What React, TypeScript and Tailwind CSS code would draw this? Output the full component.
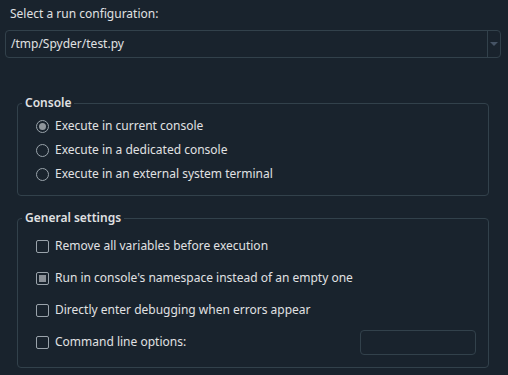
import React from "react";

function Radio({ checked, label }: { checked?: boolean; label: string }) {
  return (
    <div className="flex items-center h-6">
      <span className="w-[13px] h-[13px] rounded-full border border-[#9aa3ab] flex items-center justify-center shrink-0">
        {checked && <span className="w-[7px] h-[7px] rounded-full bg-[#8f969c]" />}
      </span>
      <span className="ml-[6px]">{label}</span>
    </div>
  );
}

function Check({ checked, label }: { checked?: boolean; label: string }) {
  return (
    <div className="flex items-center">
      <span className="w-[13px] h-[13px] rounded-[2px] border border-[#9aa3ab] flex items-center justify-center shrink-0">
        {checked && <span className="w-[7px] h-[7px] bg-[#8a9097]" />}
      </span>
      <span className="ml-[6px]">{label}</span>
    </div>
  );
}

export default function App() {
  return (
    <div
      className="w-[508px] h-[375px] bg-[#19232d] text-[#e0e1e3] text-[12px] overflow-hidden"
      style={{ fontFamily: '"Noto Sans", sans-serif' }}
    >
      <div className="pl-[10px] pt-[6px] h-[30px] leading-[16px]">Select a run configuration:</div>
      <div className="ml-[5px] mr-[7px] h-[28px] border border-[#32414b] rounded-[4px] flex items-stretch">
        <div className="flex-1 flex items-center pl-[5px]">/tmp/Spyder/test.py</div>
        <div className="w-[13px] border-l border-[#32414b] flex items-center justify-center">
          <svg width="8" height="5" viewBox="0 0 8 5">
            <path d="M0 0 L8 0 L4 4 Z" fill="#455364" />
          </svg>
        </div>
      </div>
      <div className="h-[37px]" />
      <fieldset className="ml-[17px] w-[472px] h-[101px] border border-[#32414b] rounded-[4px] p-0 m-0">
        <legend className="ml-[4px] px-[3px] text-[12px] font-semibold leading-[16px]">Console</legend>
        <div className="pl-[18px] pt-[3px]">
          <Radio checked label="Execute in current console" />
          <Radio label="Execute in a dedicated console" />
          <Radio label="Execute in an external system terminal" />
        </div>
      </fieldset>
      <div className="h-[14px]" />
      <fieldset className="ml-[17px] w-[472px] h-[158px] border border-[#32414b] rounded-[4px] p-0 m-0">
        <legend className="ml-[4px] px-[3px] text-[12px] font-semibold leading-[16px]">General settings</legend>
        <div className="pl-[18px] pr-[12px] pt-[12px] flex flex-col gap-[16px]">
          <div className="h-[16px] flex items-center"><Check label="Remove all variables before execution" /></div>
          <div className="h-[16px] flex items-center"><Check checked label="Run in console's namespace instead of an empty one" /></div>
          <div className="h-[16px] flex items-center"><Check label="Directly enter debugging when errors appear" /></div>
          <div className="h-[16px] flex items-center justify-between">
            <Check label="Command line options:" />
            <div className="w-[116px] h-[25px] border border-[#32414b] rounded-[4px]" />
          </div>
        </div>
      </fieldset>
    </div>
  );
}
